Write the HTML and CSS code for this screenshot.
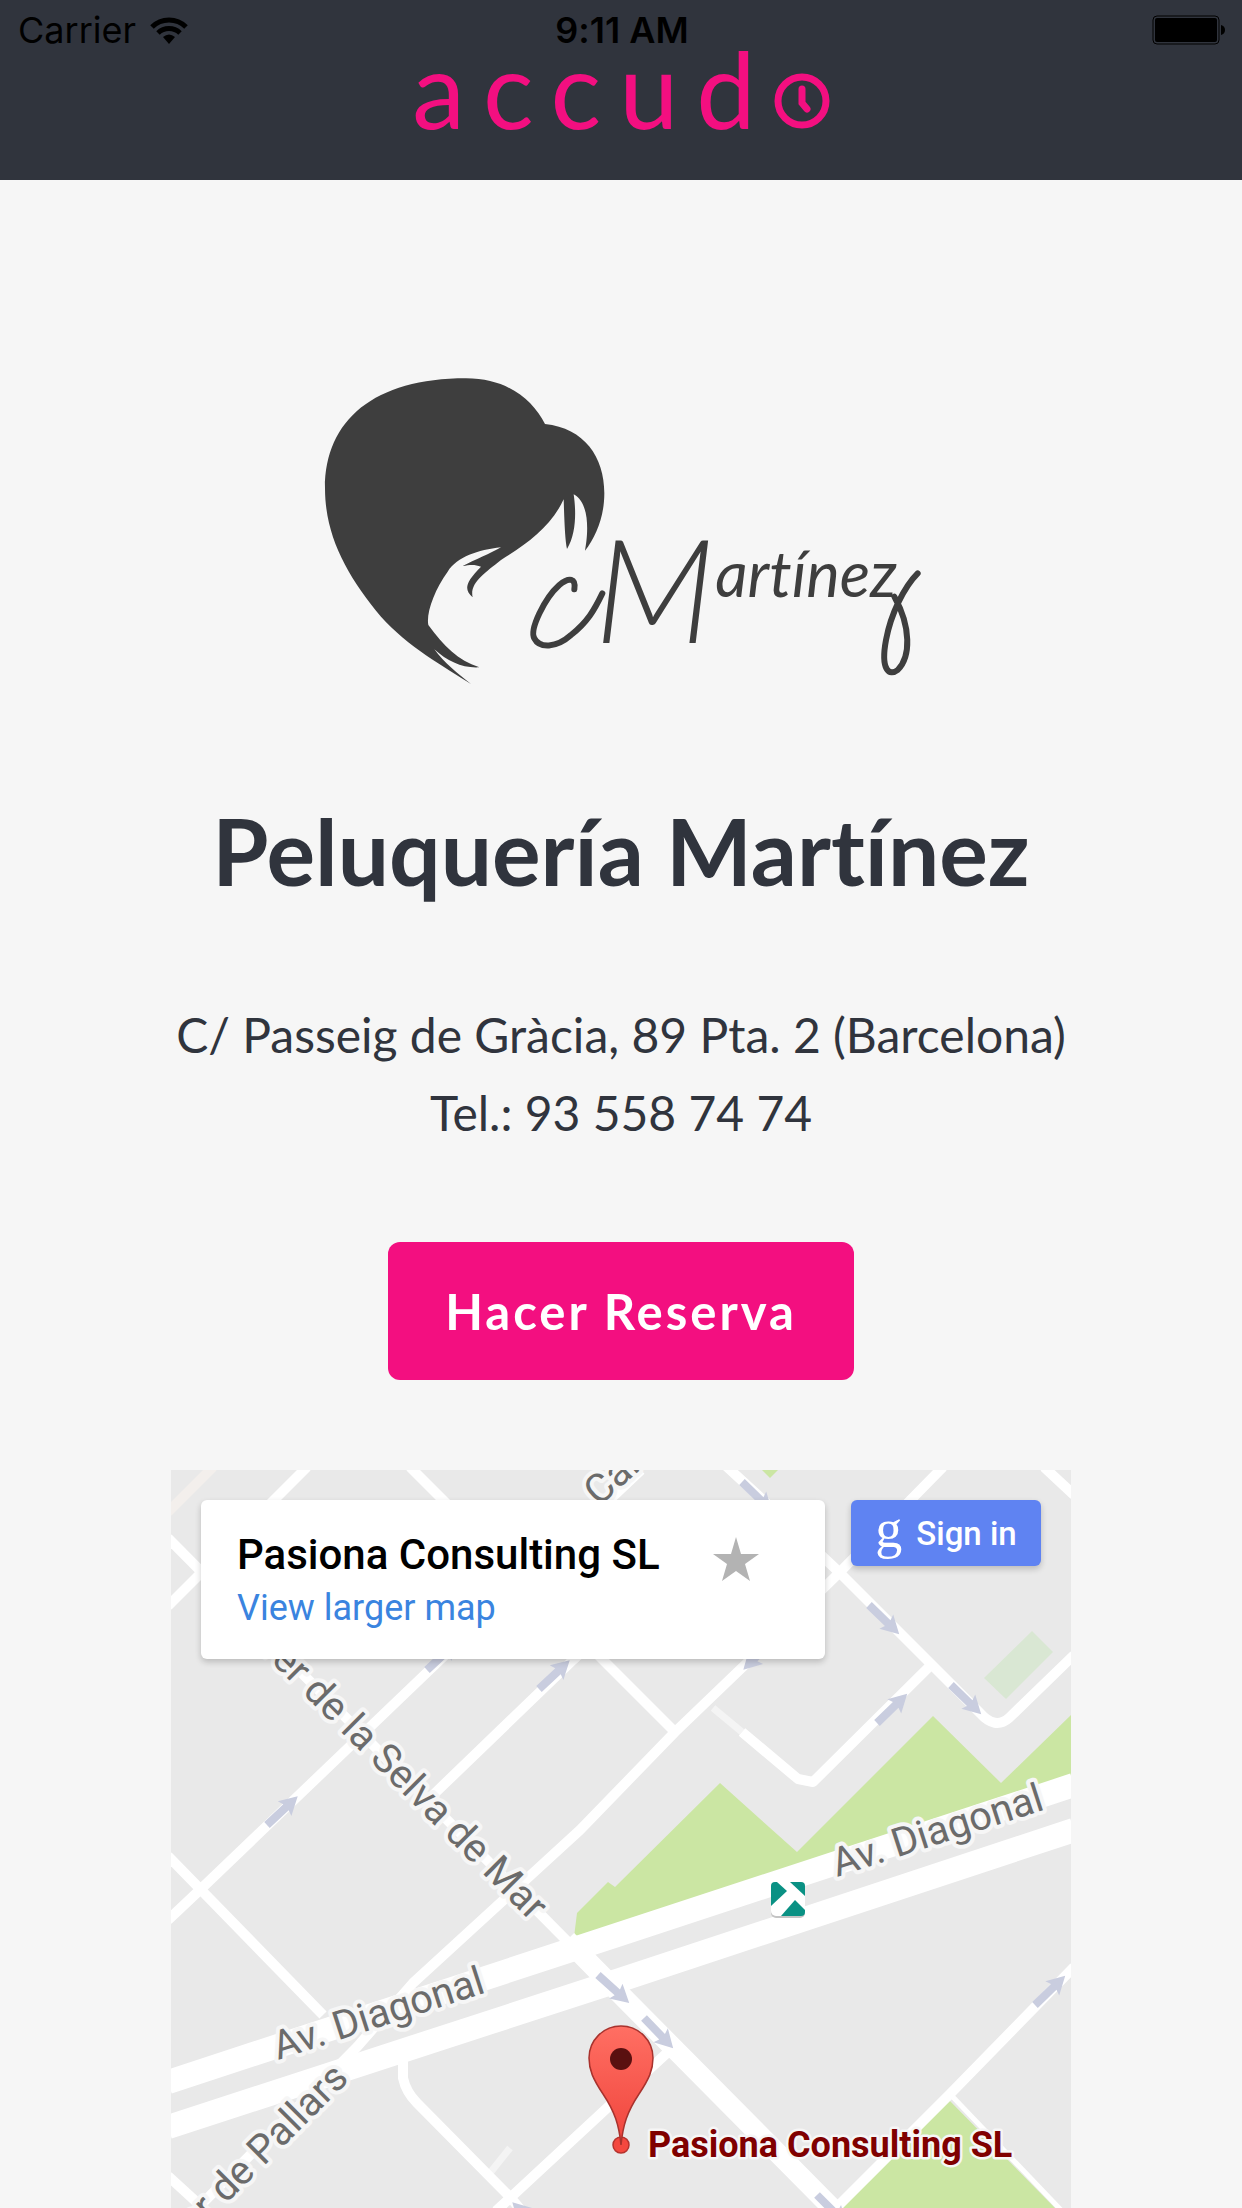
FILE: index.html
```html
<!DOCTYPE html>
<html lang="es">
<head>
    <meta charset="UTF-8">
    <meta name="viewport" content="width=device-width, initial-scale=1">
    <title>Peluquería Martínez</title>
    <link rel="stylesheet" href="styles.css">
</head>
<body>
    <header class="header">
        <div class="status-bar">
            <div class="carrier">
                <span>Carrier</span>
                <svg class="wifi" viewBox="0 0 38 28" aria-hidden="true">
                    <g fill="none" stroke="#000" stroke-width="5">
                        <path d="M2 11a24 24 0 0 1 34 0"/>
                        <path d="M8 17a16 16 0 0 1 22 0"/>
                    </g>
                    <path d="M19 28l-6-7q6-5 12 0z"/>
                </svg>
            </div>
            <span class="time">9:11 AM</span>
            <div class="battery-box">
                <svg class="battery" viewBox="0 0 74 30" aria-hidden="true">
                    <rect x="1" y="1" width="66" height="28" rx="4" fill="none" stroke="#000"/>
                    <rect x="3" y="3" width="62" height="24" rx="2"/>
                    <path d="M69 10q4 1 4 5t-4 5z"/>
                </svg>
            </div>
        </div>
        <div class="logo">
            <span>accud</span>
            <svg viewBox="0 0 56 56" aria-hidden="true">
                <circle cx="28" cy="28" r="24"/>
                <path d="M28 16v14l5 6"/>
            </svg>
        </div>
    </header>

    <main class="shop">
        <svg class="shop-logo" viewBox="0 0 1860 1038" role="img" aria-label="Martínez">
            <path fill="#3e3e3e" d="M42 385C42 180 190 55 465 55C590 55 665 120 702 192C820 205 880 290 880 400C880 470 855 530 822 572C830 530 840 430 788 403C795 450 797 520 768 567C762 540 760 480 758 418C720 500 650 550 570 600C520 640 475 670 485 712C460 690 460 670 510 620C490 612 475 615 455 618C490 600 540 580 570 562C500 570 440 590 410 635C370 690 345 760 352 795C400 860 440 900 505 922C455 925 410 905 370 868C400 910 440 940 480 972C400 920 290 860 210 770C110 650 42 530 42 385Z"/>
            <path class="swash" d="M790 688C795 655 775 650 745 675C700 715 655 810 670 835C685 865 735 865 780 825C830 785 850 750 874 700"/>
            <path class="swash" d="M1820 640C1780 680 1740 760 1725 840C1708 930 1735 950 1760 930C1800 890 1800 800 1750 710"/>
            <text class="signature" x="850" y="850"><tspan class="initial">M</tspan><tspan dy="-140">artínez</tspan></text>
        </svg>

        <h1>Peluquería Martínez</h1>
        <p class="address">C/ Passeig de Gràcia, 89 Pta. 2 (Barcelona)<br>Tel.: 93 558 74 74</p>
        <button type="button" class="book-button">Hacer Reserva</button>

        <section class="map" aria-label="Mapa">
            <svg class="map-canvas" viewBox="0 0 900 738">
                <defs>
                    <path id="arrow" d="M0-4H26L24-10L42 0L24 10L26 4H0Z"/>
                    <linearGradient id="pin" x1="0" y1="0" x2="0" y2="1">
                        <stop offset="0" stop-color="#ff6f63"/>
                        <stop offset="1" stop-color="#f0443c"/>
                    </linearGradient>
                </defs>

                <!-- parks -->
                <g fill="#cbe6a3">
                    <path d="M403 467L406 443L437 412L444 417L549 313L626 382L762 246L830 313L900 245V320L449 464Z"/>
                    <path d="M777 629L668 738H884Z"/>
                    <path d="M591 0L599 8L607 0Z"/>
                </g>
                <path fill="#d9e7d3" d="M861 161L882 182L835 229L813 208Z"/>

                <!-- streets -->
                <path d="M42-3L-3 42" stroke="#f3efec" stroke-width="10"/>
                <path d="M542 238L571 262M319 703L339 678" stroke="#f4f4f4" stroke-width="7"/>
                <g class="street">
                    <path d="M136-3L-3 136"/>
                    <path d="M239-3L504 262"/>
                    <path d="M-3 68L400 475"/>
                    <path d="M-3 450L32 417L269 190L470 0"/>
                    <path d="M262 325L402 190L440 155"/>
                    <path d="M20 745L186 577L242 513L409 360L504 262L579 190L666 105L772-3"/>
                    <path d="M554-5L592 30L669 103L809 243Q824 260 838 248L903 185"/>
                    <path d="M873-3L903 25"/>
                    <path d="M762 193L642 312L627 309L571 262"/>
                    <path d="M-3 386L152 545"/>
                    <path d="M232 590V608Q235 622 246 633L339 727L350 740"/>
                    <path d="M325 741L436 638L496 583"/>
                    <path d="M-3 706L32 738"/>
                    <path d="M903 497L779 624L663 740"/>
                </g>
                <path d="M779 624L890 740" stroke="#fff" stroke-width="5"/>
                <path d="M396 470L456 531L665 742" stroke="#fff" stroke-width="20" fill="none"/>
                <g class="avenue">
                    <path d="M-3 612L449 464L903 315"/>
                    <path d="M-3 657L449 510L903 360"/>
                </g>

                <g fill="#c9cddf">
                    <use href="#arrow" transform="translate(96 355) rotate(-43)"/>
                    <use href="#arrow" transform="translate(256 200) rotate(-43)"/>
                    <use href="#arrow" transform="translate(368 219) rotate(-43)"/>
                    <use href="#arrow" transform="translate(571 12) rotate(44)"/>
                    <use href="#arrow" transform="translate(602 170) rotate(135)"/>
                    <use href="#arrow" transform="translate(698 135) rotate(44)"/>
                    <use href="#arrow" transform="translate(780 215) rotate(44)"/>
                    <use href="#arrow" transform="translate(706 253) rotate(-44)"/>
                    <use href="#arrow" transform="translate(427 505) rotate(42)"/>
                    <use href="#arrow" transform="translate(473 548) rotate(46)"/>
                    <use href="#arrow" transform="translate(864 535) rotate(-44)"/>
                    <use href="#arrow" transform="translate(646 725) rotate(45)"/>
                    <use href="#arrow" transform="translate(371 762) rotate(225)"/>
                </g>

                <g class="street-name">
                    <text transform="translate(428 37) rotate(-42)">Can</text>
                    <text transform="translate(360 452) rotate(45)" text-anchor="end">Carrer de la Selva de Mar</text>
                    <text transform="translate(107 590) rotate(-18)">Av. Diagonal</text>
                    <text transform="translate(666 407) rotate(-18)">Av. Diagonal</text>
                    <text transform="translate(179 610) rotate(-45)" text-anchor="end">Carrer de Pallars</text>
                </g>

                <!-- tram stop -->
                <rect x="600" y="414" width="34" height="34" rx="5" fill="#c4c4c4"/>
                <rect x="600" y="412" width="34" height="34" rx="5" fill="#fff"/>
                <g fill="#0a9184">
                    <path d="M604 412H606L616 421L600 436V416Q600 412 604 412Z"/>
                    <path d="M619 412H630Q634 412 634 416V426Z"/>
                    <path d="M610 446L624 430L634 440V442Q634 446 630 446Z"/>
                </g>

                <!-- marker -->
                <circle cx="450" cy="675" r="8" fill="#f4483f" stroke="#b5332e" stroke-width="1.5"/>
                <path d="M450 675C448 655 444 642 432 624C422 609 418 600 418 588A32 32 0 0 1 482 588C482 600 478 609 468 624C456 642 452 655 450 675Z" fill="url(#pin)" stroke="#a8322d" stroke-width="1.5"/>
                <circle cx="450" cy="589" r="11" fill="#5a1010"/>
                <text class="place-name" x="477" y="687">Pasiona Consulting SL</text>
            </svg>

            <div class="map-overlay">
                <div class="place-card">
                    <div class="place-info">
                        <h2>Pasiona Consulting SL</h2>
                        <a href="#">View larger map</a>
                    </div>
                    <button type="button" class="star" aria-label="Save">
                        <svg viewBox="0 0 46 44" aria-hidden="true">
                            <path fill="#b3b3b3" d="M23 0L28 17H46L32 27L37 44L23 34L9 44L14 27L0 17H18Z"/>
                        </svg>
                    </button>
                </div>
                <button type="button" class="sign-in"><span class="g-mark">g</span>Sign in</button>
            </div>
        </section>
    </main>
</body>
</html>
```
FILE: styles.css
```css
* {
    box-sizing: border-box;
}
body {
    display: flex;
    flex-direction: column;
    height: 100vh;
    margin: 0;
    overflow: hidden;
    font-family: Lato, sans-serif;
    font-variant-ligatures: none;
    color: #30343d;
    background-color: #f6f6f6;
}
button {
    border: none;
    cursor: pointer;
}
.header {
    flex-shrink: 0;
    height: 180px;
    background-color: #30343d;
}
.status-bar {
    display: flex;
    align-items: center;
    height: 60px;
    padding: 0 16px 0 18px;
    font-family: Inter, sans-serif;
    font-size: 36px;
    color: #000;
}
.carrier,
.battery-box {
    display: flex;
    flex: 1;
    align-items: center;
    gap: 14px;
}
.battery-box {
    justify-content: flex-end;
}
.wifi {
    width: 38px;
    height: 28px;
}
.battery {
    width: 74px;
    height: 30px;
}
.time {
    font-weight: 600;
}
.logo {
    display: flex;
    justify-content: center;
    align-items: baseline;
    font-size: 106px;
    line-height: 56px;
    letter-spacing: 18px;
    color: #f30f80;
}
.logo svg {
    width: 56px;
    height: 56px;
    fill: none;
    stroke: #f30f80;
    stroke-width: 7;
    stroke-linecap: round;
}
.shop {
    display: flex;
    flex: 1;
    flex-direction: column;
    align-items: center;
    gap: 90px;
    min-height: 0;
    padding-top: 180px;
    text-align: center;
}
.shop-logo {
    flex-shrink: 0;
    width: 620px;
    height: 346px;
}
.swash {
    fill: none;
    stroke: #3e3e3e;
    stroke-width: 18;
    stroke-linecap: round;
}
.signature {
    font-size: 190px;
    font-style: italic;
    fill: #3e3e3e;
}
.initial {
    font-size: 430px;
    font-weight: 300;
}
h1 {
    margin: 0;
    font-size: 91px;
    font-weight: 700;
    line-height: 110px;
}
.address {
    margin: 0;
    font-size: 48px;
    line-height: 78px;
}
.book-button {
    flex-shrink: 0;
    height: 138px;
    padding: 0 57px;
    border-radius: 12px;
    font-family: inherit;
    font-size: 49px;
    font-weight: 700;
    letter-spacing: 3px;
    color: #fff;
    background-color: #f30f80;
}
.map {
    position: relative;
    flex: 1;
    width: 100%;
    max-width: 900px;
    min-height: 0;
    overflow: hidden;
    font-family: Roboto, sans-serif;
    text-align: left;
    background-color: #e9e9e9;
}
.map-canvas {
    display: block;
    width: 100%;
}
.street {
    fill: none;
    stroke: #fff;
    stroke-width: 10;
    stroke-linejoin: round;
}
.avenue {
    fill: none;
    stroke: #fff;
    stroke-width: 24;
}
.street-name {
    font-size: 40px;
    fill: #6b6b6b;
    stroke: #f6f6f6;
    stroke-width: 8;
    stroke-linejoin: round;
    paint-order: stroke;
}
.place-name {
    font-size: 36px;
    font-weight: 700;
    fill: #800000;
    stroke: #f6f6f6;
    stroke-width: 5;
    stroke-linejoin: round;
    paint-order: stroke;
}
.map-overlay {
    position: absolute;
    top: 30px;
    left: 30px;
    right: 30px;
    display: flex;
    justify-content: space-between;
    align-items: flex-start;
}
.place-card {
    display: flex;
    justify-content: space-between;
    align-items: flex-start;
    width: 624px;
    height: 159px;
    padding: 30px 66px 30px 36px;
    border-radius: 6px;
    background-color: #fff;
    box-shadow: 0 3px 6px rgba(0, 0, 0, 0.2);
}
.place-info h2 {
    margin: 0;
    font-size: 42px;
    font-weight: 500;
    line-height: 50px;
    color: #000;
}
.place-info a {
    font-size: 36px;
    line-height: 56px;
    text-decoration: none;
    color: #3a84df;
}
.star {
    padding: 7px 0;
    background: none;
}
.star svg {
    display: block;
    width: 46px;
    height: 44px;
}
.sign-in {
    display: flex;
    justify-content: center;
    align-items: center;
    gap: 14px;
    width: 190px;
    height: 66px;
    padding: 0;
    border-radius: 6px;
    font-family: inherit;
    font-size: 33px;
    font-weight: 500;
    color: #fff;
    background-color: #5f83f2;
    box-shadow: 0 3px 6px rgba(0, 0, 0, 0.2);
}
.g-mark {
    padding-bottom: 8px;
    font-family: "Liberation Serif", serif;
    font-size: 54px;
    font-weight: 400;
    line-height: 54px;
}
```
